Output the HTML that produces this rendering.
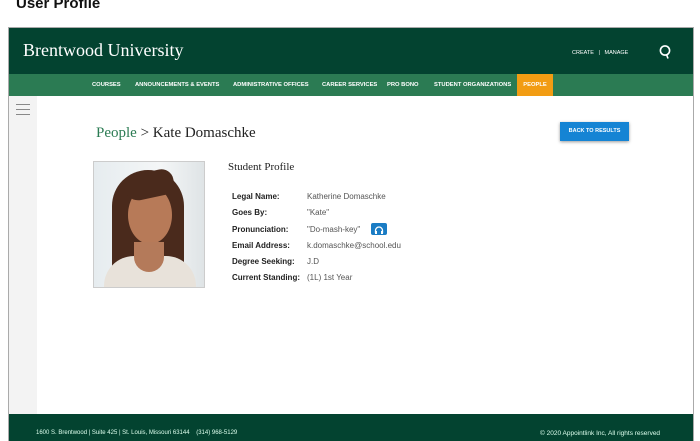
<!DOCTYPE html>
<html><head><style>
*{margin:0;padding:0;box-sizing:border-box}
body{width:700px;height:441px;background:#fff;font-family:"Liberation Sans",sans-serif;position:relative;overflow:hidden}
.a{position:absolute}
.serif{font-family:"Liberation Serif",serif}
.nav span{position:absolute;top:0;line-height:22px;font-size:5.8px;font-weight:bold;color:#fff;white-space:nowrap}
.lbl{position:absolute;left:232px;font-size:8px;font-weight:bold;color:#222}
.val{position:absolute;left:307px;font-size:8px;color:#555}
</style></head><body>
<div class="a" style="left:16px;top:-5px;font-size:15px;font-weight:bold;color:#111">User Profile</div>
<div class="a" style="left:8px;top:27px;width:686px;height:414px;border:1px solid #aaa;border-bottom:none"></div>
<div class="a" style="left:9px;top:28px;width:684px;height:46px;background:#034330"></div>
<div class="a serif" style="left:23px;top:40px;font-size:18px;color:#fff">Brentwood University</div>
<div class="a" style="left:572px;top:50px;font-size:5.5px;color:#fff">CREATE &nbsp;&nbsp;|&nbsp;&nbsp; MANAGE</div>
<svg class="a" style="left:658px;top:44px" width="14" height="16" viewBox="0 0 14 16"><circle cx="7" cy="6.5" r="4.6" fill="none" stroke="#fff" stroke-width="1.6"/><path d="M8.5 10.5l1.5 4" stroke="#fff" stroke-width="1.6"/></svg>
<div class="a nav" style="left:9px;top:74px;width:684px;height:22px;background:#2b7b53">
<span style="left:83px">COURSES</span>
<span style="left:126px">ANNOUNCEMENTS &amp; EVENTS</span>
<span style="left:224px">ADMINISTRATIVE OFFICES</span>
<span style="left:313px">CAREER SERVICES</span>
<span style="left:378px">PRO BONO</span>
<span style="left:425px">STUDENT ORGANIZATIONS</span>
<span style="left:508px;width:36px;height:22px;background:#f29c13;text-align:center">PEOPLE</span>
</div>
<div class="a" style="left:9px;top:96px;width:28px;height:318px;background:#f3f3f3"></div>
<div class="a" style="left:16px;top:104px;width:14px;height:1px;background:#888;box-shadow:0 5px 0 #888,0 10px 0 #888"></div>
<div class="a serif" style="left:96px;top:125px;font-size:15px;color:#222"><span style="color:#2b7b53">People</span> &gt; Kate Domaschke</div>
<div class="a" style="left:560px;top:122px;width:69px;height:19px;background:#1584d4;color:#fff;font-size:5.5px;font-weight:bold;text-align:center;line-height:19px;box-shadow:0 1px 3px rgba(0,0,0,.4)">BACK TO RESULTS</div>
<div class="a" style="left:93px;top:161px;width:112px;height:127px;border:1px solid #ccc;background:linear-gradient(90deg,#e6ecef,#f4f6f7 60%,#dfe4e6);overflow:hidden">
<div class="a" style="left:18px;top:8px;width:72px;height:130px;border-radius:36px 36px 10px 10px;background:#4a2a1c"></div>
<div class="a" style="left:34px;top:24px;width:44px;height:58px;border-radius:50%;background:#b77a58"></div>
<div class="a" style="left:30px;top:10px;width:50px;height:26px;border-radius:25px 25px 0 30px;background:#4a2a1c;transform:rotate(-12deg)"></div>
<div class="a" style="left:10px;top:94px;width:92px;height:40px;border-radius:30px 30px 0 0;background:#e8e2da"></div>
<div class="a" style="left:40px;top:80px;width:30px;height:30px;background:#b47a5a;border-radius:0 0 15px 15px"></div>
</div>
<div class="a serif" style="left:228px;top:161px;font-size:11px;color:#222">Student Profile</div>
<div class="lbl" style="top:192px">Legal Name:</div><div class="val" style="top:192px">Katherine Domaschke</div>
<div class="lbl" style="top:208px">Goes By:</div><div class="val" style="top:208px">"Kate"</div>
<div class="lbl" style="top:225px">Pronunciation:</div><div class="val" style="top:225px">"Do-mash-key"</div>
<div class="a" style="left:371px;top:223px;width:16px;height:12px;background:#1a7cc4;border-radius:2px"><svg width="16" height="12" viewBox="0 0 16 12"><path d="M4.5 9V6.5a3.5 3.5 0 017 0V9" fill="none" stroke="#fff" stroke-width="1.3"/><rect x="4" y="7" width="2" height="3" fill="#fff"/><rect x="10" y="7" width="2" height="3" fill="#fff"/></svg></div>
<div class="lbl" style="top:241px">Email Address:</div><div class="val" style="top:241px">k.domaschke@school.edu</div>
<div class="lbl" style="top:257px">Degree Seeking:</div><div class="val" style="top:257px">J.D</div>
<div class="lbl" style="top:273px">Current Standing:</div><div class="val" style="top:273px">(1L) 1st Year</div>
<div class="a" style="left:9px;top:414px;width:684px;height:27px;background:#034330"></div>
<div class="a" style="left:36px;top:430px;font-size:6px;color:#dfe">1600 S. Brentwood | Suite 425 | St. Louis, Missouri 63144 &nbsp;&nbsp;&nbsp;(314) 968-5129</div>
<div class="a" style="left:540px;top:430px;font-size:6.5px;color:#dfe">© 2020 Appointlink Inc, All rights reserved</div>
</body></html>
